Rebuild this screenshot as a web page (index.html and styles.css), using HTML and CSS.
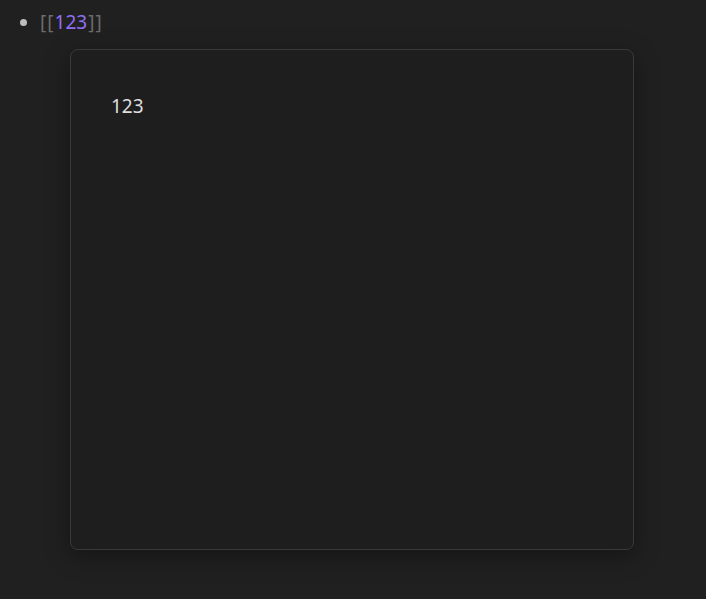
FILE: index.html
```html
<!DOCTYPE html>
<html>
<head>
<meta charset="utf-8">
<link rel="stylesheet" href="styles.css">
</head>
<body>
<div class="page">
  <div class="item">
    <span class="bullet"></span>
    <span class="link"><span class="br">[[</span><span class="name">123</span><span class="br">]]</span></span>
  </div>
  <div class="popover">
    <div class="content">123</div>
  </div>
</div>
</body>
</html>
```
FILE: styles.css
```css
html, body {
  margin: 0;
  padding: 0;
  background: #202020;
  height: 100%;
}
.page {
  font-family: "Noto Sans", "Open Sans", sans-serif;
  font-size: 19px;
  color: #dedede;
  padding: 8px 0 0 20px;
}
.item {
  display: flex;
  align-items: center;
  height: 28px;
}
.bullet {
  width: 7px;
  height: 7px;
  border-radius: 50%;
  background: #bdbdbd;
  margin-right: 13px;
}
.br {
  color: #6b6b6b;
  letter-spacing: 1px;
}
.name {
  color: #8f6ff5;
  margin-right: 1px;
}
.popover {
  margin: 13px 0 0 50px;
  width: 562px;
  height: 499px;
  border: 1px solid #3a3a3a;
  border-radius: 8px;
  background: #1e1e1e;
  box-shadow: 0 6px 24px rgba(0,0,0,0.35);
  box-sizing: content-box;
}
.content {
  padding: 42px 0 0 40px;
  line-height: 28px;
}
```
